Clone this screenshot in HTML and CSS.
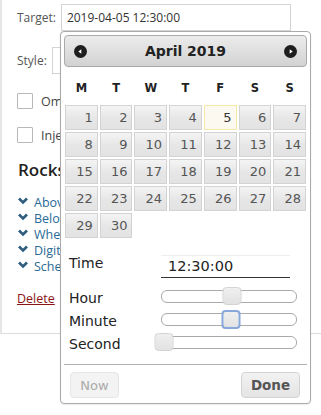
FILE: index.html
```html
<!DOCTYPE html>
<html>
<head>
<meta charset="utf-8">
<link rel="stylesheet" href="styles.css">
</head>
<body>
<div class="panel">
  <div class="field">
    <span class="lbl">Target:</span>
    <div class="input">2019-04-05 12:30:00</div>
  </div>
  <div class="field style-row">
    <span class="lbl">Style:</span>
    <div class="input select"></div>
  </div>
  <div class="check-row first">
    <span class="box"></span><span class="ctext">Omit</span>
  </div>
  <div class="check-row">
    <span class="box"></span><span class="ctext">Inject</span>
  </div>
  <h2 class="heading">Rocks</h2>
  <ul class="items">
    <li><svg class="chev" width="10" height="8" viewBox="0 0 10 8"><path d="M1 1.5 L5 5.5 L9 1.5" fill="none" stroke="#2f5d7e" stroke-width="2.6"/></svg><span>Above</span></li>
    <li><svg class="chev" width="10" height="8" viewBox="0 0 10 8"><path d="M1 1.5 L5 5.5 L9 1.5" fill="none" stroke="#2f5d7e" stroke-width="2.6"/></svg><span>Below</span></li>
    <li><svg class="chev" width="10" height="8" viewBox="0 0 10 8"><path d="M1 1.5 L5 5.5 L9 1.5" fill="none" stroke="#2f5d7e" stroke-width="2.6"/></svg><span>When</span></li>
    <li><svg class="chev" width="10" height="8" viewBox="0 0 10 8"><path d="M1 1.5 L5 5.5 L9 1.5" fill="none" stroke="#2f5d7e" stroke-width="2.6"/></svg><span>Digital</span></li>
    <li><svg class="chev" width="10" height="8" viewBox="0 0 10 8"><path d="M1 1.5 L5 5.5 L9 1.5" fill="none" stroke="#2f5d7e" stroke-width="2.6"/></svg><span>Schedule</span></li>
  </ul>
  <a class="delete" href="#">Delete</a>
</div>

<div class="dp">
  <div class="dp-header">
    <span class="nav"><svg width="13" height="13" viewBox="0 0 13 13"><circle cx="6.5" cy="6.5" r="6.5" fill="#1e1e1e"/><path d="M4.3 6.5 L7.3 4.2 L7.3 8.8 Z" fill="#fff"/></svg></span>
    <span class="dp-title">April 2019</span>
    <span class="nav"><svg width="13" height="13" viewBox="0 0 13 13"><circle cx="6.5" cy="6.5" r="6.5" fill="#1e1e1e"/><path d="M8.7 6.5 L5.7 4.2 L5.7 8.8 Z" fill="#fff"/></svg></span>
  </div>
  <div class="dow">
    <span>M</span><span>T</span><span>W</span><span>T</span><span>F</span><span>S</span><span>S</span>
  </div>
  <div class="days">
    <span class="day">1</span><span class="day">2</span><span class="day">3</span><span class="day">4</span><span class="day today">5</span><span class="day">6</span><span class="day">7</span>
    <span class="day">8</span><span class="day">9</span><span class="day">10</span><span class="day">11</span><span class="day">12</span><span class="day">13</span><span class="day">14</span>
    <span class="day">15</span><span class="day">16</span><span class="day">17</span><span class="day">18</span><span class="day">19</span><span class="day">20</span><span class="day">21</span>
    <span class="day">22</span><span class="day">23</span><span class="day">24</span><span class="day">25</span><span class="day">26</span><span class="day">27</span><span class="day">28</span>
    <span class="day">29</span><span class="day">30</span>
  </div>
  <div class="tp">
    <div class="tp-row time-row">
      <span class="tp-lbl">Time</span>
      <div class="time-val">12:30:00</div>
    </div>
    <div class="tp-row slider-row">
      <span class="tp-lbl">Hour</span>
      <div class="track"><div class="rail"><span class="handle" style="left:52.2%"></span></div></div>
    </div>
    <div class="tp-row slider-row">
      <span class="tp-lbl">Minute</span>
      <div class="track"><div class="rail"><span class="handle focus" style="left:50.8%"></span></div></div>
    </div>
    <div class="tp-row slider-row">
      <span class="tp-lbl">Second</span>
      <div class="track"><div class="rail"><span class="handle" style="left:0%"></span></div></div>
    </div>
  </div>
  <div class="buttons">
    <button class="btn now">Now</button>
    <button class="btn done">Done</button>
  </div>
</div>
</body>
</html>
```

FILE: styles.css
```css
html, body {
  margin: 0;
  padding: 0;
  background: #fff;
}
body {
  width: 321px;
  height: 415px;
  overflow: hidden;
  position: relative;
  font-family: "Open Sans", "Noto Sans", sans-serif;
}
.panel {
  box-sizing: border-box;
  height: 334px;
  width: 100%;
  overflow: hidden;
  border-left: 2px solid #e6e6e6;
  border-bottom: 1px solid #dcdcdc;
  padding: 4px 0 0 15px;
}
.field {
  display: flex;
  align-items: center;
  gap: 5px;
  height: 27px;
}
.lbl {
  font-size: 12px;
  color: #555;
}
.input {
  box-sizing: border-box;
  width: 230px;
  height: 27px;
  border: 1px solid #d4d4d4;
  padding-left: 5px;
  font-size: 12px;
  line-height: 25px;
  color: #333;
  background: #fff;
}
.style-row {
  margin-top: 16px;
}
.select {
  width: 238px;
}
.check-row {
  display: flex;
  align-items: center;
  gap: 8px;
  height: 16px;
  margin-top: 18px;
}
.check-row.first {
  margin-top: 19px;
}
.box {
  box-sizing: border-box;
  width: 16px;
  height: 16px;
  border: 1px solid #b8b8b8;
  border-radius: 1px;
  background: #fff;
}
.ctext {
  font-size: 12.5px;
  color: #444;
  white-space: nowrap;
}
.heading {
  margin: 17px 0 0 1px;
  font-size: 17px;
  line-height: 20px;
  font-weight: 600;
  color: #222;
}
.items {
  list-style: none;
  margin: 15px 0 0 1px;
  padding: 0;
}
.items li {
  display: flex;
  align-items: center;
  gap: 6px;
  height: 15.8px;
  font-size: 12.5px;
  color: #2a6a96;
  white-space: nowrap;
}
.chev {
  flex: none;
  margin-top: -3px;
}
.delete {
  display: inline-block;
  margin-top: 17px;
  font-size: 12.5px;
  line-height: 16px;
  color: #8b1414;
}

/* Datepicker */
.dp {
  position: absolute;
  left: 60px;
  top: 31px;
  width: 251px;
  box-sizing: border-box;
  border: 1px solid #aaa;
  border-radius: 4px;
  background: #fff;
  padding: 3px 3px 5px;
  font-family: "DejaVu Sans", Verdana, sans-serif;
  color: #222;
  box-shadow: 0 1px 2px rgba(0,0,0,0.08);
}
.dp-header {
  height: 32px;
  box-sizing: border-box;
  border: 1px solid #aaa;
  border-radius: 4px;
  background: linear-gradient(#ececec, #d2d2d2);
  display: flex;
  align-items: center;
  justify-content: space-between;
  padding: 0 9px;
}
.nav {
  display: flex;
  width: 13px;
  height: 13px;
}
.dp-title {
  font-weight: bold;
  font-size: 14px;
  color: #222;
}
.dow {
  display: grid;
  grid-template-columns: repeat(7, 1fr);
  column-gap: 2px;
  margin: 0 1px;
  height: 38px;
  align-items: center;
  text-align: center;
  font-weight: bold;
  font-size: 11.5px;
  color: #222;
  padding-top: 3px;
  box-sizing: border-box;
}
.days {
  display: grid;
  grid-template-columns: repeat(7, 1fr);
  grid-auto-rows: 25px;
  gap: 2px;
  margin: 0 1px;
}
.day {
  border: 1px solid #d3d3d3;
  background: linear-gradient(#f4f4f4, #e6e6e6 55%, #e3e3e3);
  color: #555;
  font-size: 13px;
  text-align: right;
  padding-right: 4px;
  line-height: 23px;
}
.day.today {
  border-color: #f6e9a8;
  background: #fcfaf0;
  color: #363636;
}
.tp {
  margin-top: 17px;
  padding: 0 10px 0 5px;
}
.tp-row {
  display: flex;
}
.tp-lbl {
  width: 92px;
  flex: none;
  font-size: 14px;
  line-height: 16px;
  color: #222;
}
.time-row {
  height: 23px;
}
.time-val {
  box-sizing: border-box;
  width: 129px;
  height: 23px;
  border-top: 1px solid #eee;
  border-bottom: 1px solid #333;
  padding-left: 7px;
  font-size: 14.5px;
  line-height: 21px;
  color: #222;
}
.slider-row {
  height: 23px;
}
.time-row + .slider-row {
  margin-top: 7px;
}
.slider-row .tp-lbl {
  padding-top: 5px;
}
.track {
  flex: 1;
  box-sizing: border-box;
  height: 13px;
  margin-top: 5px;
  border: 1px solid #aaa;
  border-radius: 6px;
  background: #fff;
  position: relative;
}
.rail {
  position: absolute;
  left: 1.5px;
  right: 0.5px;
  top: 0;
  bottom: 0;
}
.handle {
  position: absolute;
  top: -4px;
  width: 19px;
  height: 18px;
  box-sizing: border-box;
  transform: translateX(-50%);
  border: 1px solid #d3d3d3;
  border-radius: 4px;
  background: linear-gradient(#efefef, #e2e2e2);
}
.handle.focus {
  border: 2px solid #88a8dc;
  height: 19px;
  top: -4px;
}
.buttons {
  margin-top: 10px;
  border-top: 1px solid #b0b0b0;
  padding: 7px 7px 0 6px;
  display: flex;
  justify-content: space-between;
}
.btn {
  box-sizing: border-box;
  height: 26px;
  border-radius: 4px;
  font-family: "DejaVu Sans", Verdana, sans-serif;
  padding: 0;
  margin: 0;
}
.now {
  width: 49px;
  border: 1px solid #e6e6e6;
  background: #f3f3f3;
  color: #aaa;
  font-size: 13px;
}
.done {
  width: 59px;
  border: 1px solid #d3d3d3;
  background: linear-gradient(#f2f2f2, #e4e4e4);
  color: #555;
  font-weight: bold;
  font-size: 13.5px;
}
```
